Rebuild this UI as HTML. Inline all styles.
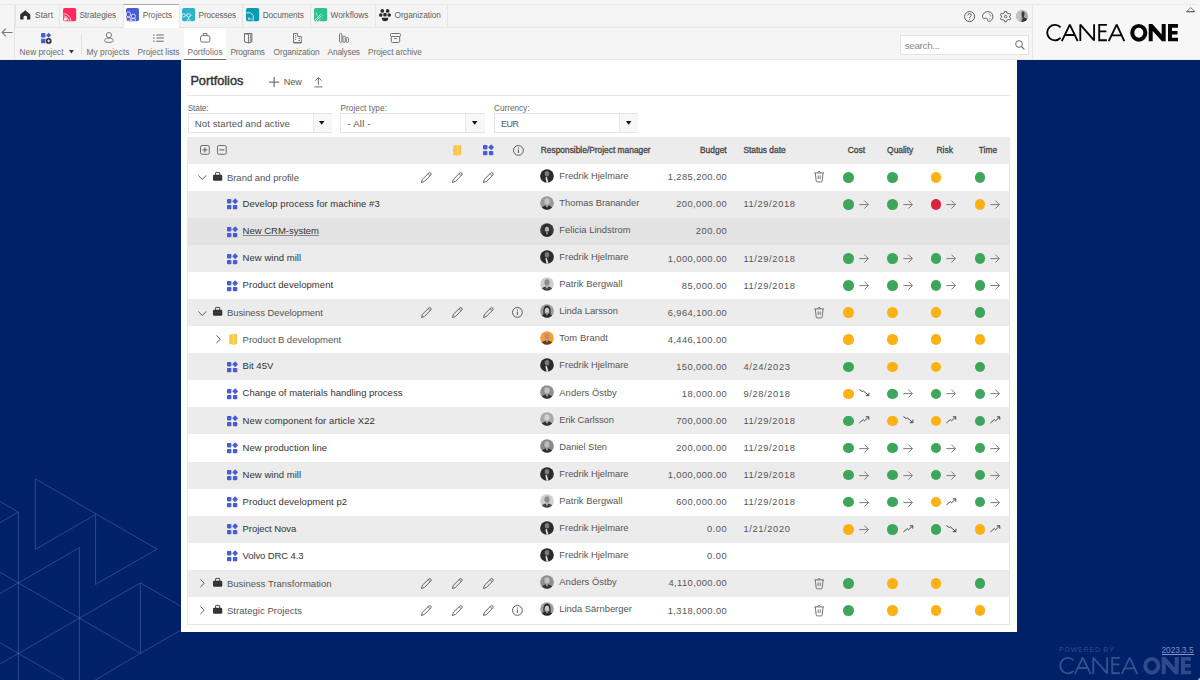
<!DOCTYPE html>
<html><head><meta charset="utf-8"><title>Portfolios</title>
<style>
*{box-sizing:border-box;margin:0;padding:0}
html,body{width:1200px;height:680px;overflow:hidden}
body{position:relative;background:#002068;font-family:"Liberation Sans",sans-serif;color:#444}
.a{position:absolute}
.t{position:absolute;white-space:nowrap;line-height:1}
svg{position:absolute;overflow:visible}
#hdr{left:0;top:0;width:1200px;height:60px;background:#f5f5f5}
.tab{position:absolute;top:4px;height:24px;border-left:1px solid #e6e6e6;border-top:1px solid #ececec;border-bottom:1px solid #e6e6e6;background:#f4f4f4}
.tab.act{background:#fff;border-top:1px solid #a9a9a9;border-bottom:none;border-left:1px solid #e6e6e6;border-right:1px solid #e6e6e6}
.ti{position:absolute;top:3.6px;width:13.2px;height:13.2px;border-radius:2px}
.tt{position:absolute;top:7.6px;font-size:8.2px;color:#555;line-height:1;white-space:nowrap}
.sn{position:absolute;top:48.8px;font-size:8.2px;color:#666;line-height:1;white-space:nowrap}
#panel{left:181px;top:60px;width:836px;height:571.5px;background:#fff}
.row{position:absolute;left:188px;width:822px;height:27.08px}
.w{background:#fff}.g{background:#ececec}.h{background:#e3e3e3}
.nm{position:absolute;font-size:9.5px;line-height:1;white-space:nowrap;color:#333}
.pn{color:#555}
.per{position:absolute;font-size:9.4px;line-height:1;white-space:nowrap;color:#555}
.bud{position:absolute;font-size:10.1px;line-height:1;white-space:nowrap;color:#555;text-align:right}
.dt{position:absolute;font-size:10.4px;line-height:1;white-space:nowrap;color:#555}
.dot{position:absolute;width:10.6px;height:10.6px;border-radius:50%}
.G{background:#3ea65a}.O{background:#fdb113}.R{background:#d9263f}
.av{position:absolute;width:14px;height:14px;border-radius:50%;overflow:hidden}
.th{position:absolute;top:147px;font-size:8px;font-weight:bold;color:#4a4a4a;line-height:1;white-space:nowrap}
</style></head><body>

<svg style="left:0;top:0" width="1200" height="680"><path d="M35.4 478.9 L157.0 549.1 M35.4 478.9 L35.4 549.3 M35.4 549.3 L95.6 514.6 M95.6 514.6 L95.6 584.4 M95.6 584.4 L157.0 549.1 M18.4 512.1 L18.4 680.0 M79.4 547.6 L79.4 680.0 M140.4 582.9 L140.4 653.4 M0.0 501.5 L18.4 512.1 M0.0 522.7 L18.4 512.1 M0.0 572.3 L140.4 653.4 M0.0 593.5 L18.4 582.9 M18.4 582.9 L79.4 547.6 M18.4 653.4 L140.4 582.9 M140.4 582.9 L181.0 606.3 M0.0 642.8 L18.4 653.4 M0.0 664.0 L18.4 653.4 M18.4 653.4 L63.9 679.7 M94.5 680.5 L140.4 653.4 M140.4 653.4 L181.0 630.0" stroke="#5a73b4" stroke-opacity="0.55" stroke-width="0.9" fill="none"/></svg>
<div class="a" id="hdr"></div>
<div class="a" style="left:0;top:0;width:1200px;height:3.5px;background:#f6f6f6"></div>
<div class="a" style="left:0;top:3.5px;width:1194px;height:1.2px;background:#ebebeb"></div>
<div class="a" style="left:1186px;top:3.5px;width:14px;height:12px;border-top:1.2px solid #ebebeb;border-right:1.2px solid #ebebeb;border-top-right-radius:6px"></div>
<div class="a" style="left:0;top:4.5px;width:15px;height:54.5px;background:#f5f5f5;border-right:1px solid #e6e6e6"></div>
<svg style="left:1.00px;top:27.60px" width="12" height="9" viewBox="0 0 12 9"><path d="M11.6 4.5 H1.2 M5 0.6 L1.1 4.5 L5 8.4" stroke="#7a7a7a" stroke-width="1.1" fill="none"/></svg>
<div class="tab" style="left:15.00px;width:44.30px"></div>
<div class="t" style="left:35.00px;top:10.97px;font-size:8.30px;color:#616161;letter-spacing:0.118px;">Start</div>
<div class="tab" style="left:59.30px;width:63.30px"></div>
<div class="t" style="left:79.40px;top:10.97px;font-size:8.30px;color:#616161;letter-spacing:-0.063px;">Strategies</div>
<div class="tab act" style="left:122.60px;width:57.40px"></div>
<div class="t" style="left:142.70px;top:10.97px;font-size:8.30px;color:#616161;letter-spacing:-0.069px;">Projects</div>
<div class="tab" style="left:179.00px;width:63.20px"></div>
<div class="t" style="left:198.60px;top:10.97px;font-size:8.30px;color:#616161;letter-spacing:-0.156px;">Processes</div>
<div class="tab" style="left:242.20px;width:68.05px"></div>
<div class="t" style="left:262.70px;top:10.97px;font-size:8.30px;color:#616161;letter-spacing:-0.085px;">Documents</div>
<div class="tab" style="left:310.25px;width:64.75px"></div>
<div class="t" style="left:330.50px;top:10.97px;font-size:8.30px;color:#616161;letter-spacing:-0.016px;">Workflows</div>
<div class="tab" style="left:375.00px;width:72.00px"></div>
<div class="t" style="left:394.50px;top:10.97px;font-size:8.30px;color:#616161;letter-spacing:-0.051px;">Organization</div>
<div class="a" style="left:447px;top:4.5px;width:1px;height:23.5px;background:#e6e6e6"></div>
<div class="a" style="left:447px;top:27.2px;width:585px;height:1px;background:#e6e6e6"></div>
<svg style="left:20.00px;top:9.60px" width="10.5" height="9.8" viewBox="0 0 10.5 9.8"><path d="M5.25 0.3 L10.3 4.5 L10.3 9.6 L7 9.6 L7 6.8 Q7 5.7 5.25 5.7 Q3.5 5.7 3.5 6.8 L3.5 9.6 L0.2 9.6 L0.2 4.5 Z" fill="#2f2f2f"/></svg>
<svg style="left:63.00px;top:8.00px" width="13.2" height="13.2" viewBox="0 0 13.2 13.2"><rect width="13.2" height="13.2" rx="1.8" fill="#ff2a5f"/><g stroke="#f6dbe0" stroke-width="0.95" fill="none"><path d="M0.4 5.6 A7.4 7.4 0 0 1 7.8 13"/><path d="M0.4 7.9 A5.1 5.1 0 0 1 5.5 13"/></g><circle cx="2.4" cy="11" r="1.55" fill="#ffffff" stroke="#f6dbe0" stroke-width="0.6"/></svg>
<svg style="left:126.30px;top:8.00px" width="13" height="13.2" viewBox="0 0 13 13.2"><rect width="13" height="13.2" rx="1.8" fill="#4b5bd1"/><g stroke="#e3e6fa" stroke-width="0.9" fill="none"><rect x="0.45" y="3.9" width="3.9" height="4.9" rx="1.6"/><rect x="0.45" y="9.4" width="3.9" height="3.6" rx="0.8"/><rect x="5.2" y="6.3" width="4.2" height="3.9" rx="1.6"/><rect x="5.2" y="10.6" width="4.2" height="2.6" rx="0.6"/></g></svg>
<svg style="left:182.00px;top:8.00px" width="13.2" height="13.2" viewBox="0 0 13.2 13.2"><rect width="13.2" height="13.2" rx="1.8" fill="#2cb5c9"/><g stroke="#d3f0f4" stroke-width="0.95" fill="none"><circle cx="1.6" cy="7.3" r="1.7"/><circle cx="6.6" cy="7.3" r="1.8"/><circle cx="6.6" cy="12.4" r="1.4"/><path d="M3.3 7.3 H4.8 M6.6 9.1 V11 M8.4 7.3 H9.6"/></g></svg>
<svg style="left:246.00px;top:8.00px" width="13.2" height="13.2" viewBox="0 0 13.2 13.2"><rect width="13.2" height="13.2" rx="1.8" fill="#0d9aaf"/><path d="M0.3 4.8 H4.6 L7.2 7.4 V13" stroke="#d0eef3" stroke-width="0.95" fill="none"/><path d="M2.4 9.4 V12 M3.8 9.4 V12 M5.1 10.2 V12" stroke="#d0eef3" stroke-width="0.75"/></svg>
<svg style="left:313.75px;top:8.00px" width="13.2" height="13.2" viewBox="0 0 13.2 13.2"><rect width="13.2" height="13.2" rx="1.8" fill="#2ec190"/><path d="M0.5 12.4 L6.8 6.2 M2 13 L7 8 M4.6 13 L6.8 10.8" stroke="#d8f4ea" stroke-width="0.9" fill="none"/><path d="M7.6 5.4 V6 M8.4 7.4 V8 M8.4 9.6 V10.2 M2 4.8 Q2.2 6.6 3.2 7.6" stroke="#d8f4ea" stroke-width="0.9" fill="none"/></svg>
<svg style="left:379.00px;top:7.50px" width="12.5" height="13.5" viewBox="0 0 12.5 13.5"><g fill="#2b2b2b"><circle cx="3.3" cy="2.9" r="1.85"/><circle cx="8.6" cy="2.9" r="1.85"/><circle cx="1.8" cy="7" r="1.85"/><circle cx="6" cy="6.7" r="1.85"/><circle cx="10.2" cy="7" r="1.85"/><path d="M2.8 9.7 H9.3 Q9.3 13.2 6.05 13.2 Q2.8 13.2 2.8 9.7 Z"/></g></svg>
<div class="a" style="left:0;top:59.1px;width:1200px;height:1.2px;background:#e9e9e9"></div>
<svg style="left:41.00px;top:33.00px" width="11" height="11" viewBox="0 0 11 11"><g fill="#4b5bd1"><rect x="0" y="0" width="4.4" height="4.4" rx="0.4"/><rect x="0" y="5.8" width="4.4" height="4.4" rx="0.4"/><path d="M7.6 -0.2 L10.2 2.3 L7.6 4.8 L5.1 2.3 Z"/></g><circle cx="7.7" cy="7.9" r="2.9" fill="#2f2f2f"/><path d="M7.7 6.4 V9.4 M6.2 7.9 H9.2" stroke="#fff" stroke-width="0.9"/></svg>
<div class="t" style="left:19.50px;top:47.77px;font-size:8.30px;color:#6b6b6b;letter-spacing:0.018px;">New project</div>
<svg style="left:69.00px;top:50.40px" width="4.8" height="3.6" viewBox="0 0 4.8 3.6"><path d="M0 0 H4.8 L2.4 3.6 Z" fill="#333"/></svg>
<div class="a" style="left:81px;top:34px;width:1px;height:20px;background:#e2e2e2"></div>
<svg style="left:103.50px;top:32.20px" width="10" height="11" viewBox="0 0 10 11"><g stroke="#777" stroke-width="1" fill="none"><circle cx="4.9" cy="3.1" r="2.6"/><path d="M4.9 6.2 C1.2 6.2 0.5 7.6 0.5 8.4 C0.5 9.6 2 10.4 4.9 10.4 C7.8 10.4 9.3 9.6 9.3 8.4 C9.3 7.6 8.6 6.2 4.9 6.2 Z"/></g></svg>
<div class="t" style="left:86.50px;top:47.77px;font-size:8.30px;color:#6b6b6b;letter-spacing:0.057px;">My projects</div>
<svg style="left:153.00px;top:33.50px" width="11.5" height="8" viewBox="0 0 11.5 8"><g fill="#6a6a6a"><rect x="0.2" y="0.4" width="1.3" height="1.2"/><rect x="0.2" y="3.4" width="1.3" height="1.2"/><rect x="0.2" y="6.6" width="1.3" height="1.2"/></g><g stroke="#6a6a6a" stroke-width="1.1"><path d="M3.3 1 H10.8 M3.3 4 H10.8 M3.3 7.2 H10.8"/></g></svg>
<div class="t" style="left:137.50px;top:47.77px;font-size:8.30px;color:#6b6b6b;letter-spacing:-0.036px;">Project lists</div>
<div class="a" style="left:184px;top:28.2px;width:41.5px;height:31.8px;background:#fff"></div>
<div class="a" style="left:184px;top:58.6px;width:41.5px;height:1.6px;background:#6a6a6a"></div>
<svg style="left:199.80px;top:32.80px" width="10.4" height="9.6" viewBox="0 0 10.4 9.6"><g stroke="#6a6a6a" stroke-width="0.95" fill="none"><rect x="0.5" y="2.6" width="9.4" height="6.5" rx="1.8"/><path d="M3.3 2.6 V0.5 H6.9 V2.6"/></g></svg>
<div class="t" style="left:187.60px;top:47.77px;font-size:8.30px;color:#6b6b6b;letter-spacing:0.045px;">Portfolios</div>
<svg style="left:244.00px;top:32.80px" width="8.5" height="10.5" viewBox="0 0 8.5 10.5"><g stroke="#666" stroke-width="0.95" fill="none" stroke-linejoin="round"><path d="M0.5 0.5 L4.6 1.4 V10 L0.5 8.9 Z"/><path d="M0.5 0.5 H7.9 V8.9 L4.6 10"/><path d="M6.8 1.2 V8.5"/></g></svg>
<div class="t" style="left:230.50px;top:47.77px;font-size:8.30px;color:#6b6b6b;letter-spacing:-0.211px;">Programs</div>
<svg style="left:292.50px;top:32.70px" width="9" height="10.5" viewBox="0 0 9 10.5"><g stroke="#6a6a6a" stroke-width="0.9" fill="none"><path d="M0.5 10 V0.5 H4.6 V3.5 H8.3 V10 Z"/><path d="M2 2.5 H3.2 M2 4.5 H3.2 M2 6.5 H3.2 M5.5 5.5 H7 M5.5 7.5 H7 M0.5 9.5 H8.3"/></g></svg>
<div class="t" style="left:273.60px;top:47.77px;font-size:8.30px;color:#6b6b6b;letter-spacing:-0.087px;">Organization</div>
<svg style="left:339.00px;top:33.00px" width="10" height="10" viewBox="0 0 10 10"><g stroke="#6a6a6a" stroke-width="0.9" fill="none"><rect x="0.5" y="0.5" width="2.4" height="9" rx="1.2"/><rect x="3.9" y="3" width="2.4" height="6.5" rx="1.2"/><rect x="7.2" y="4.4" width="2.3" height="5.1" rx="1.15"/></g></svg>
<div class="t" style="left:327.60px;top:47.77px;font-size:8.30px;color:#6b6b6b;letter-spacing:-0.183px;">Analyses</div>
<svg style="left:390.00px;top:33.20px" width="11" height="10" viewBox="0 0 11 10"><g stroke="#6a6a6a" stroke-width="0.95" fill="none"><rect x="0.5" y="0.5" width="10" height="3" rx="1"/><path d="M1.3 3.5 V8.2 Q1.3 9.5 2.6 9.5 H8.4 Q9.7 9.5 9.7 8.2 V3.5 M4.2 5.6 H6.8"/></g></svg>
<div class="t" style="left:368.00px;top:47.77px;font-size:8.30px;color:#6b6b6b;letter-spacing:-0.064px;">Project archive</div>
<svg style="left:963.70px;top:10.60px" width="11.2" height="11.2" viewBox="0 0 11.2 11.2"><circle cx="5.6" cy="5.6" r="5.05" stroke="#555" stroke-width="0.95" fill="none"/><path d="M3.9 4.4 Q3.9 2.7 5.6 2.7 Q7.3 2.7 7.3 4.3 Q7.3 5.2 6.3 5.7 Q5.6 6.1 5.6 6.9 V7.2" stroke="#555" stroke-width="0.95" fill="none"/><circle cx="5.6" cy="8.7" r="0.6" fill="#555"/></svg>
<svg style="left:981.80px;top:10.80px" width="11.4" height="11" viewBox="0 0 11.4 11"><path d="M5.9 0.6 C9.2 0.6 10.9 3 10.9 5.6 C10.9 8.6 8.8 10.4 7 10.4 C5.6 10.4 5.6 9 5.2 8 C4.7 6.9 3.6 7 2.4 7.4 C1.2 7.8 0.5 7 0.5 5.6 C0.5 2.6 3 0.6 5.9 0.6 Z" stroke="#555" stroke-width="0.95" fill="none"/><path d="M6.6 2.6 Q8.6 3.4 8.9 5.6 M8.2 7 Q7.8 8.2 6.8 8.6" stroke="#777" stroke-width="0.7" fill="none"/></svg>
<svg style="left:999.60px;top:10.50px" width="11.2" height="11.2" viewBox="0 0 11.2 11.2"><path d="M4.6 0.5 H6.6 L7 2 L8.3 2.7 L9.8 2.2 L10.8 3.9 L9.7 5 V6.2 L10.8 7.3 L9.8 9 L8.3 8.5 L7 9.2 L6.6 10.7 H4.6 L4.2 9.2 L2.9 8.5 L1.4 9 L0.4 7.3 L1.5 6.2 V5 L0.4 3.9 L1.4 2.2 L2.9 2.7 L4.2 2 Z" stroke="#555" stroke-width="0.95" fill="none" stroke-linejoin="round"/><circle cx="5.6" cy="5.6" r="1.25" stroke="#555" stroke-width="0.95" fill="none"/></svg>
<svg style="left:1016.00px;top:10.00px" width="12" height="12" viewBox="0 0 12 12"><defs><clipPath id="avc"><circle cx="6" cy="6" r="6"/></clipPath></defs><g clip-path="url(#avc)"><rect width="12" height="12" fill="#a8a8a8"/><path d="M0 0 H6 L4 12 H0 Z" fill="#c4c4c4"/><path d="M6.2 1.4 Q8.6 1.2 8.6 3.8 Q8.4 5.6 7.6 6.4 L10.4 9.6 L8.6 12 L5.2 12 L6.6 8.6 Q5.4 6.4 5.6 4 Q5.6 1.6 6.2 1.4 Z" fill="#3a3a3a"/><path d="M9 8 L12 9 L12 12 L9 12 Z" fill="#2a2a2a"/></g></svg>
<div class="a" style="left:899.9px;top:34.8px;width:128.8px;height:19.8px;background:#fff;border:1px solid #e3e3e3"></div>
<div class="t" style="left:904.80px;top:40.50px;font-size:9.80px;color:#8a8a8a;letter-spacing:-0.323px;">search...</div>
<svg style="left:1014.80px;top:39.50px" width="10" height="10" viewBox="0 0 10 10"><circle cx="4" cy="4" r="3.35" stroke="#666" stroke-width="1" fill="none"/><path d="M6.5 6.5 L9.4 9.4" stroke="#666" stroke-width="1.1"/></svg>
<div class="a" style="left:1031.7px;top:4.5px;width:1px;height:54.3px;background:#e6e6e6"></div>
<div class="a" style="left:1032.7px;top:4.7px;width:167.3px;height:54.3px;background:#f7f7f7;border-top-right-radius:4px"></div>
<svg style="left:1185.70px;top:6.70px" width="9.5" height="5.2" viewBox="0 0 9.5 5.2"><path d="M4.75 0.6 L8.9 4.6 H0.6 Z" stroke="#666" stroke-width="0.9" fill="none" stroke-linejoin="round"/><path d="M0.6 4.6 H8.9" stroke="#666" stroke-width="1.3"/></svg>
<svg style="left:1046.00px;top:24.30px" width="133" height="18" viewBox="0 0 133 18"><g stroke="#050505" stroke-width="1.85" fill="none" stroke-miterlimit="1.6"><path d="M14.6 3.3 A7.75 7.75 0 1 0 14.6 13.9"/><path d="M15.8 17.1 L23.8 0.7 L31.7 17.1 M19 11 H28.6"/><path d="M34.3 17 V0.6 L48.1 16.4 V0.2"/><path d="M60.9 0.8 H53.2 V16.2 H60.9 M53.2 7.4 H60.4"/><path d="M62.7 17.1 L70.7 0.7 L78.3 17.1 M65.9 11.3 H75.1"/></g><g fill="#050505"><path fill-rule="evenodd" d="M92.8 -0.1 A8.6 8.9 0 1 1 92.8 17.7 A8.6 8.9 0 1 1 92.8 -0.1 Z M92.8 3.8 A4.5 5 0 1 0 92.8 13.8 A4.5 5 0 1 0 92.8 3.8 Z"/><path d="M102.7 17.3 V0.1 H106.4 L115.7 10.4 V0.1 H119.7 V17.3 H116 L106.7 7.1 V17.3 Z"/><path d="M122 0.1 H132 V3.7 H126 V6.9 H131.5 V10.4 H126 V13.8 H132 V17.3 H122 Z"/></g></svg>
<div class="a" id="panel"></div>
<div class="t" style="left:190.40px;top:74.74px;font-size:12.71px;color:#333;-webkit-text-stroke:0.45px #333;">Portfolios</div>
<svg style="left:268.60px;top:76.70px" width="10.2" height="10.2" viewBox="0 0 10.2 10.2"><path d="M5.1 0 V10.2 M0 5.1 H10.2" stroke="#555" stroke-width="1"/></svg>
<div class="t" style="left:283.70px;top:77.86px;font-size:9.15px;color:#555;">New</div>
<svg style="left:314.00px;top:76.50px" width="8.8" height="10.5" viewBox="0 0 8.8 10.5"><path d="M4.4 0.6 V8.2 M1.2 3.7 L4.4 0.5 L7.6 3.7 M0.3 9.9 H8.5" stroke="#666" stroke-width="0.95" fill="none"/></svg>
<div class="a" style="left:187.3px;top:95.2px;width:822.7px;height:1px;background:#e6e6e6"></div>
<div class="t" style="left:187.70px;top:104.96px;font-size:8.20px;color:#666;letter-spacing:-0.105px;">State:</div>
<div class="a" style="left:187.70px;top:113.3px;width:144.3px;height:20px;background:#fff;border:1px solid #e4e4e4"></div>
<div class="a" style="left:312.70px;top:114.3px;width:1px;height:18px;background:#e8e8e8"></div>
<div class="a" style="left:313.70px;top:114.3px;width:18.3px;height:18px;background:#f7f7f7"></div>
<svg style="left:319.30px;top:121.20px" width="5.4" height="3.8" viewBox="0 0 5.4 3.8"><path d="M0 0 H5.4 L2.7 3.8 Z" fill="#111"/></svg>
<div class="t" style="left:194.70px;top:119.07px;font-size:9.60px;color:#555;letter-spacing:0.091px;">Not started and active</div>
<div class="t" style="left:340.40px;top:104.96px;font-size:8.20px;color:#666;letter-spacing:0.085px;">Project type:</div>
<div class="a" style="left:340.40px;top:113.3px;width:144.3px;height:20px;background:#fff;border:1px solid #e4e4e4"></div>
<div class="a" style="left:465.40px;top:114.3px;width:1px;height:18px;background:#e8e8e8"></div>
<div class="a" style="left:466.40px;top:114.3px;width:18.3px;height:18px;background:#f7f7f7"></div>
<svg style="left:472.00px;top:121.20px" width="5.4" height="3.8" viewBox="0 0 5.4 3.8"><path d="M0 0 H5.4 L2.7 3.8 Z" fill="#111"/></svg>
<div class="t" style="left:347.40px;top:119.07px;font-size:9.60px;color:#555;letter-spacing:0.239px;">- All -</div>
<div class="t" style="left:494.00px;top:104.96px;font-size:8.20px;color:#666;letter-spacing:-0.005px;">Currency:</div>
<div class="a" style="left:494.00px;top:113.3px;width:144.3px;height:20px;background:#fff;border:1px solid #e4e4e4"></div>
<div class="a" style="left:619.00px;top:114.3px;width:1px;height:18px;background:#e8e8e8"></div>
<div class="a" style="left:620.00px;top:114.3px;width:18.3px;height:18px;background:#f7f7f7"></div>
<svg style="left:625.60px;top:121.20px" width="5.4" height="3.8" viewBox="0 0 5.4 3.8"><path d="M0 0 H5.4 L2.7 3.8 Z" fill="#111"/></svg>
<div class="t" style="left:501.00px;top:119.58px;font-size:9.00px;color:#555;letter-spacing:-0.451px;">EUR</div>
<div class="a" style="left:187.3px;top:136.8px;width:822.7px;height:26.9px;background:#ececec"></div>
<svg style="left:199.60px;top:145.20px" width="9.8" height="9.8" viewBox="0 0 9.8 9.8"><rect x="0.5" y="0.5" width="8.8" height="8.8" rx="1.6" stroke="#666" stroke-width="0.95" fill="none"/><path d="M4.9 2.4 V7.4 M2.4 4.9 H7.4" stroke="#555" stroke-width="0.95"/></svg>
<svg style="left:216.90px;top:145.20px" width="9.8" height="9.8" viewBox="0 0 9.8 9.8"><rect x="0.5" y="0.5" width="8.8" height="8.8" rx="1.6" stroke="#666" stroke-width="0.95" fill="none"/><path d="M2.4 4.9 H7.4" stroke="#555" stroke-width="0.95"/></svg>
<svg style="left:452.80px;top:144.50px" width="8.4" height="11" viewBox="0 0 8.4 11"><path d="M0.2 0.8 L4.2 0 V11 L0.2 9.6 Z" fill="#f9c54a"/><path d="M4.6 0 H8.2 V9.8 L4.6 11 Z" fill="#f9c54a"/></svg>
<svg style="left:483.20px;top:145.10px" width="10.6" height="10.6" viewBox="0 0 10.6 10.6"><g fill="#4b5bd1"><rect x="0" y="0" width="4.4" height="4.4" rx="0.8"/><rect x="0" y="5.9" width="4.4" height="4.4" rx="0.8"/><rect x="5.9" y="5.9" width="4.4" height="4.4" rx="0.8"/><path d="M8.15 -0.75 L11.1 2.2 L8.15 5.15 L5.2 2.2 Z"/></g></svg>
<svg style="left:513.00px;top:144.90px" width="11" height="11" viewBox="0 0 11 11"><circle cx="5.4" cy="5.4" r="4.9" stroke="#555" stroke-width="0.95" fill="none"/><path d="M5.4 4.6 V8" stroke="#555" stroke-width="1"/><circle cx="5.4" cy="3.1" r="0.6" fill="#555"/></svg>
<div class="t" style="left:540.80px;top:146.10px;font-size:8.39px;color:#444;-webkit-text-stroke:0.3px #444;">Responsible/Project manager</div>
<div class="t" style="left:700.00px;top:146.07px;font-size:8.42px;color:#444;-webkit-text-stroke:0.3px #444;">Budget</div>
<div class="t" style="left:743.40px;top:146.12px;font-size:8.36px;color:#444;-webkit-text-stroke:0.3px #444;">Status date</div>
<div class="t" style="left:847.70px;top:146.04px;font-size:8.46px;color:#444;-webkit-text-stroke:0.3px #444;">Cost</div>
<div class="t" style="left:887.10px;top:146.07px;font-size:8.42px;color:#444;-webkit-text-stroke:0.3px #444;">Quality</div>
<div class="t" style="left:936.40px;top:145.97px;font-size:8.54px;color:#444;-webkit-text-stroke:0.3px #444;">Risk</div>
<div class="t" style="left:978.80px;top:146.11px;font-size:8.37px;color:#444;-webkit-text-stroke:0.3px #444;">Time</div>
<div class="row w" style="top:163.70px"></div>
<svg style="left:198.30px;top:175.44px" width="8.6" height="5" viewBox="0 0 8.6 5"><path d="M0.4 0.4 L4.3 4.6 L8.2 0.4" stroke="#555" stroke-width="0.95" fill="none"/></svg>
<svg style="left:212.80px;top:172.04px" width="9.4" height="9" viewBox="0 0 9.4 9"><rect x="0" y="2.8" width="9.3" height="6" rx="1.3" fill="#333"/><path d="M2.6 3 V1 Q2.6 0.4 3.2 0.4 H6.1 Q6.7 0.4 6.7 1 V3" stroke="#333" stroke-width="0.9" fill="none"/><path d="M0.6 5.2 H8.7" stroke="#555" stroke-width="0.4"/></svg>
<div class="t" style="left:226.90px;top:172.70px;font-size:9.50px;color:#555;letter-spacing:-0.016px;">Brand and profile</div>
<svg style="left:420.80px;top:171.84px" width="11" height="11" viewBox="0 0 11 11"><path d="M1.3 7.4 L7.9 0.9 Q8.8 0.1 9.8 1.1 Q10.7 2.1 9.9 2.9 L3.4 9.5 L0.5 10.5 Z M7.1 1.7 L9.1 3.7" stroke="#555" stroke-width="0.9" fill="none" stroke-linejoin="round"/></svg>
<svg style="left:451.80px;top:171.84px" width="11" height="11" viewBox="0 0 11 11"><path d="M1.3 7.4 L7.9 0.9 Q8.8 0.1 9.8 1.1 Q10.7 2.1 9.9 2.9 L3.4 9.5 L0.5 10.5 Z M7.1 1.7 L9.1 3.7" stroke="#555" stroke-width="0.9" fill="none" stroke-linejoin="round"/></svg>
<svg style="left:482.80px;top:171.84px" width="11" height="11" viewBox="0 0 11 11"><path d="M1.3 7.4 L7.9 0.9 Q8.8 0.1 9.8 1.1 Q10.7 2.1 9.9 2.9 L3.4 9.5 L0.5 10.5 Z M7.1 1.7 L9.1 3.7" stroke="#555" stroke-width="0.9" fill="none" stroke-linejoin="round"/></svg>
<svg style="left:813.80px;top:171.44px" width="10.4" height="11.4" viewBox="0 0 10.4 11.4"><path d="M0.4 1.9 H10 M3.8 1.7 Q4.2 0.4 5.2 0.4 Q6.2 0.4 6.6 1.7 M1.3 2 L2.2 10 Q2.3 10.9 3.2 10.9 H7.2 Q8.1 10.9 8.2 10 L9.1 2 M4.2 4.5 V8 M6.2 4.5 V8" stroke="#666" stroke-width="0.9" fill="none" stroke-linejoin="round"/></svg>
<svg style="left:540.30px;top:168.64px" width="14" height="14" viewBox="0 0 14 14"><defs><clipPath id="av1"><circle cx="7" cy="7" r="6.85"/></clipPath></defs><g clip-path="url(#av1)"><rect width="14" height="14" fill="#2b2b2b"/><ellipse cx="7" cy="4.8" rx="2.3" ry="2.8" fill="#7a7a7a"/><path d="M5.4 8.2 L6.8 8 L8.6 14 L6.6 14 Z" fill="#e8e8e8"/></g></svg>
<div class="t" style="left:559.30px;top:170.88px;font-size:9.40px;color:#555;letter-spacing:-0.005px;">Fredrik Hjelmare</div>
<div class="t" style="right:472.88px;top:173.27px;font-size:9.30px;color:#555;letter-spacing:0.425px;">1,285,200.00</div>
<div class="dot G" style="left:843.20px;top:171.94px"></div>
<div class="dot G" style="left:887.10px;top:171.94px"></div>
<div class="dot O" style="left:930.80px;top:171.94px"></div>
<div class="dot G" style="left:974.60px;top:171.94px"></div>
<div class="row g" style="top:190.78px"></div>
<svg style="left:227.20px;top:199.42px" width="10.6" height="10.6" viewBox="0 0 10.6 10.6"><g fill="#4b5bd1"><rect x="0" y="0" width="4.4" height="4.4" rx="0.8"/><rect x="0" y="5.9" width="4.4" height="4.4" rx="0.8"/><rect x="5.9" y="5.9" width="4.4" height="4.4" rx="0.8"/><path d="M8.15 -0.75 L11.1 2.2 L8.15 5.15 L5.2 2.2 Z"/></g></svg>
<div class="t" style="left:242.60px;top:198.88px;font-size:9.50px;color:#333;letter-spacing:0.030px;">Develop process for machine #3</div>
<svg style="left:540.30px;top:195.72px" width="14" height="14" viewBox="0 0 14 14"><defs><clipPath id="av2"><circle cx="7" cy="7" r="6.85"/></clipPath></defs><g clip-path="url(#av2)"><rect width="14" height="14" fill="#9a9a9a"/><ellipse cx="7" cy="5.4" rx="2.6" ry="3.2" fill="#c4c4c4"/><path d="M0.5 14 Q1.6 9.6 7 9.4 Q12.4 9.6 13.5 14 Z" fill="#2a2a2a"/><path d="M6 9.6 L7 12 L8 9.6 Z" fill="#dddddd"/></g></svg>
<div class="t" style="left:559.30px;top:197.96px;font-size:9.40px;color:#555;letter-spacing:-0.018px;">Thomas Branander</div>
<div class="t" style="right:472.86px;top:200.35px;font-size:9.30px;color:#555;letter-spacing:0.445px;">200,000.00</div>
<div class="t" style="left:743.40px;top:200.35px;font-size:9.30px;color:#555;letter-spacing:0.630px;">11/29/2018</div>
<div class="dot G" style="left:843.20px;top:199.02px"></div>
<svg style="left:858.80px;top:199.92px" width="10.2" height="9.2" viewBox="0 0 10.2 9.2"><path d="M0.3 4.6 H9.4 M5.4 0.6 L9.4 4.6 L5.4 8.6" stroke="#6e6e6e" stroke-width="0.9" fill="none"/></svg>
<div class="dot G" style="left:887.10px;top:199.02px"></div>
<svg style="left:902.70px;top:199.92px" width="10.2" height="9.2" viewBox="0 0 10.2 9.2"><path d="M0.3 4.6 H9.4 M5.4 0.6 L9.4 4.6 L5.4 8.6" stroke="#6e6e6e" stroke-width="0.9" fill="none"/></svg>
<div class="dot R" style="left:930.80px;top:199.02px"></div>
<svg style="left:946.40px;top:199.92px" width="10.2" height="9.2" viewBox="0 0 10.2 9.2"><path d="M0.3 4.6 H9.4 M5.4 0.6 L9.4 4.6 L5.4 8.6" stroke="#6e6e6e" stroke-width="0.9" fill="none"/></svg>
<div class="dot O" style="left:974.60px;top:199.02px"></div>
<svg style="left:990.20px;top:199.92px" width="10.2" height="9.2" viewBox="0 0 10.2 9.2"><path d="M0.3 4.6 H9.4 M5.4 0.6 L9.4 4.6 L5.4 8.6" stroke="#6e6e6e" stroke-width="0.9" fill="none"/></svg>
<div class="row h" style="top:217.86px"></div>
<svg style="left:227.20px;top:226.50px" width="10.6" height="10.6" viewBox="0 0 10.6 10.6"><g fill="#4b5bd1"><rect x="0" y="0" width="4.4" height="4.4" rx="0.8"/><rect x="0" y="5.9" width="4.4" height="4.4" rx="0.8"/><rect x="5.9" y="5.9" width="4.4" height="4.4" rx="0.8"/><path d="M8.15 -0.75 L11.1 2.2 L8.15 5.15 L5.2 2.2 Z"/></g></svg>
<div class="t" style="left:242.60px;top:225.96px;font-size:9.50px;color:#333;letter-spacing:-0.010px;text-decoration:underline;text-decoration-color:#888;text-underline-offset:1px;">New CRM-system</div>
<svg style="left:540.30px;top:222.80px" width="14" height="14" viewBox="0 0 14 14"><defs><clipPath id="av3"><circle cx="7" cy="7" r="6.85"/></clipPath></defs><g clip-path="url(#av3)"><rect width="14" height="14" fill="#3a3a3a"/><ellipse cx="7" cy="5.4" rx="2.6" ry="3.2" fill="#b0b0b0"/><path d="M3.4 10 Q2.6 1.4 7 1.4 Q11.4 1.4 10.6 10 L9.4 10 Q9.8 3.6 7 3.6 Q4.2 3.6 4.6 10 Z" fill="#262626"/><path d="M0.5 14 Q1.6 9.6 7 9.4 Q12.4 9.6 13.5 14 Z" fill="#262626"/><path d="M6 9.6 L7 12 L8 9.6 Z" fill="#cfcfcf"/></g></svg>
<div class="t" style="left:559.30px;top:225.04px;font-size:9.40px;color:#555;letter-spacing:0.028px;">Felicia Lindstrom</div>
<div class="t" style="right:472.81px;top:227.43px;font-size:9.30px;color:#555;letter-spacing:0.489px;">200.00</div>
<div class="row g" style="top:244.94px"></div>
<svg style="left:227.20px;top:253.58px" width="10.6" height="10.6" viewBox="0 0 10.6 10.6"><g fill="#4b5bd1"><rect x="0" y="0" width="4.4" height="4.4" rx="0.8"/><rect x="0" y="5.9" width="4.4" height="4.4" rx="0.8"/><rect x="5.9" y="5.9" width="4.4" height="4.4" rx="0.8"/><path d="M8.15 -0.75 L11.1 2.2 L8.15 5.15 L5.2 2.2 Z"/></g></svg>
<div class="t" style="left:242.60px;top:253.04px;font-size:9.50px;color:#333;letter-spacing:0.036px;">New wind mill</div>
<svg style="left:540.30px;top:249.88px" width="14" height="14" viewBox="0 0 14 14"><defs><clipPath id="av4"><circle cx="7" cy="7" r="6.85"/></clipPath></defs><g clip-path="url(#av4)"><rect width="14" height="14" fill="#2b2b2b"/><ellipse cx="7" cy="4.8" rx="2.3" ry="2.8" fill="#7a7a7a"/><path d="M5.4 8.2 L6.8 8 L8.6 14 L6.6 14 Z" fill="#e8e8e8"/></g></svg>
<div class="t" style="left:559.30px;top:252.12px;font-size:9.40px;color:#555;letter-spacing:-0.005px;">Fredrik Hjelmare</div>
<div class="t" style="right:472.88px;top:254.51px;font-size:9.30px;color:#555;letter-spacing:0.425px;">1,000,000.00</div>
<div class="t" style="left:743.40px;top:254.51px;font-size:9.30px;color:#555;letter-spacing:0.630px;">11/29/2018</div>
<div class="dot G" style="left:843.20px;top:253.18px"></div>
<svg style="left:858.80px;top:254.08px" width="10.2" height="9.2" viewBox="0 0 10.2 9.2"><path d="M0.3 4.6 H9.4 M5.4 0.6 L9.4 4.6 L5.4 8.6" stroke="#6e6e6e" stroke-width="0.9" fill="none"/></svg>
<div class="dot G" style="left:887.10px;top:253.18px"></div>
<svg style="left:902.70px;top:254.08px" width="10.2" height="9.2" viewBox="0 0 10.2 9.2"><path d="M0.3 4.6 H9.4 M5.4 0.6 L9.4 4.6 L5.4 8.6" stroke="#6e6e6e" stroke-width="0.9" fill="none"/></svg>
<div class="dot G" style="left:930.80px;top:253.18px"></div>
<svg style="left:946.40px;top:254.08px" width="10.2" height="9.2" viewBox="0 0 10.2 9.2"><path d="M0.3 4.6 H9.4 M5.4 0.6 L9.4 4.6 L5.4 8.6" stroke="#6e6e6e" stroke-width="0.9" fill="none"/></svg>
<div class="dot G" style="left:974.60px;top:253.18px"></div>
<svg style="left:990.20px;top:254.08px" width="10.2" height="9.2" viewBox="0 0 10.2 9.2"><path d="M0.3 4.6 H9.4 M5.4 0.6 L9.4 4.6 L5.4 8.6" stroke="#6e6e6e" stroke-width="0.9" fill="none"/></svg>
<div class="row w" style="top:272.02px"></div>
<svg style="left:227.20px;top:280.66px" width="10.6" height="10.6" viewBox="0 0 10.6 10.6"><g fill="#4b5bd1"><rect x="0" y="0" width="4.4" height="4.4" rx="0.8"/><rect x="0" y="5.9" width="4.4" height="4.4" rx="0.8"/><rect x="5.9" y="5.9" width="4.4" height="4.4" rx="0.8"/><path d="M8.15 -0.75 L11.1 2.2 L8.15 5.15 L5.2 2.2 Z"/></g></svg>
<div class="t" style="left:242.60px;top:280.12px;font-size:9.50px;color:#333;letter-spacing:0.040px;">Product development</div>
<svg style="left:540.30px;top:276.96px" width="14" height="14" viewBox="0 0 14 14"><defs><clipPath id="av5"><circle cx="7" cy="7" r="6.85"/></clipPath></defs><g clip-path="url(#av5)"><rect width="14" height="14" fill="#cfcfcf"/><ellipse cx="7" cy="5.4" rx="2.6" ry="3.2" fill="#8d8d8d"/><path d="M0.5 14 Q1.6 9.6 7 9.4 Q12.4 9.6 13.5 14 Z" fill="#444444"/><path d="M6 9.6 L7 12 L8 9.6 Z" fill="#eeeeee"/></g></svg>
<div class="t" style="left:559.30px;top:279.20px;font-size:9.40px;color:#555;letter-spacing:0.051px;">Patrik Bergwall</div>
<div class="t" style="right:472.86px;top:281.59px;font-size:9.30px;color:#555;letter-spacing:0.445px;">85,000.00</div>
<div class="t" style="left:743.40px;top:281.59px;font-size:9.30px;color:#555;letter-spacing:0.630px;">11/29/2018</div>
<div class="dot G" style="left:843.20px;top:280.26px"></div>
<svg style="left:858.80px;top:281.16px" width="10.2" height="9.2" viewBox="0 0 10.2 9.2"><path d="M0.3 4.6 H9.4 M5.4 0.6 L9.4 4.6 L5.4 8.6" stroke="#6e6e6e" stroke-width="0.9" fill="none"/></svg>
<div class="dot G" style="left:887.10px;top:280.26px"></div>
<svg style="left:902.70px;top:281.16px" width="10.2" height="9.2" viewBox="0 0 10.2 9.2"><path d="M0.3 4.6 H9.4 M5.4 0.6 L9.4 4.6 L5.4 8.6" stroke="#6e6e6e" stroke-width="0.9" fill="none"/></svg>
<div class="dot G" style="left:930.80px;top:280.26px"></div>
<svg style="left:946.40px;top:281.16px" width="10.2" height="9.2" viewBox="0 0 10.2 9.2"><path d="M0.3 4.6 H9.4 M5.4 0.6 L9.4 4.6 L5.4 8.6" stroke="#6e6e6e" stroke-width="0.9" fill="none"/></svg>
<div class="dot G" style="left:974.60px;top:280.26px"></div>
<svg style="left:990.20px;top:281.16px" width="10.2" height="9.2" viewBox="0 0 10.2 9.2"><path d="M0.3 4.6 H9.4 M5.4 0.6 L9.4 4.6 L5.4 8.6" stroke="#6e6e6e" stroke-width="0.9" fill="none"/></svg>
<div class="row g" style="top:299.10px"></div>
<svg style="left:198.30px;top:310.84px" width="8.6" height="5" viewBox="0 0 8.6 5"><path d="M0.4 0.4 L4.3 4.6 L8.2 0.4" stroke="#555" stroke-width="0.95" fill="none"/></svg>
<svg style="left:212.80px;top:307.44px" width="9.4" height="9" viewBox="0 0 9.4 9"><rect x="0" y="2.8" width="9.3" height="6" rx="1.3" fill="#333"/><path d="M2.6 3 V1 Q2.6 0.4 3.2 0.4 H6.1 Q6.7 0.4 6.7 1 V3" stroke="#333" stroke-width="0.9" fill="none"/><path d="M0.6 5.2 H8.7" stroke="#555" stroke-width="0.4"/></svg>
<div class="t" style="left:226.90px;top:308.10px;font-size:9.50px;color:#555;letter-spacing:-0.061px;">Business Development</div>
<svg style="left:420.80px;top:307.24px" width="11" height="11" viewBox="0 0 11 11"><path d="M1.3 7.4 L7.9 0.9 Q8.8 0.1 9.8 1.1 Q10.7 2.1 9.9 2.9 L3.4 9.5 L0.5 10.5 Z M7.1 1.7 L9.1 3.7" stroke="#555" stroke-width="0.9" fill="none" stroke-linejoin="round"/></svg>
<svg style="left:451.80px;top:307.24px" width="11" height="11" viewBox="0 0 11 11"><path d="M1.3 7.4 L7.9 0.9 Q8.8 0.1 9.8 1.1 Q10.7 2.1 9.9 2.9 L3.4 9.5 L0.5 10.5 Z M7.1 1.7 L9.1 3.7" stroke="#555" stroke-width="0.9" fill="none" stroke-linejoin="round"/></svg>
<svg style="left:482.80px;top:307.24px" width="11" height="11" viewBox="0 0 11 11"><path d="M1.3 7.4 L7.9 0.9 Q8.8 0.1 9.8 1.1 Q10.7 2.1 9.9 2.9 L3.4 9.5 L0.5 10.5 Z M7.1 1.7 L9.1 3.7" stroke="#555" stroke-width="0.9" fill="none" stroke-linejoin="round"/></svg>
<svg style="left:512.40px;top:307.24px" width="11" height="11" viewBox="0 0 11 11"><circle cx="5.4" cy="5.4" r="4.9" stroke="#555" stroke-width="0.95" fill="none"/><path d="M5.4 4.6 V8" stroke="#555" stroke-width="1"/><circle cx="5.4" cy="3.1" r="0.6" fill="#555"/></svg>
<svg style="left:813.80px;top:306.84px" width="10.4" height="11.4" viewBox="0 0 10.4 11.4"><path d="M0.4 1.9 H10 M3.8 1.7 Q4.2 0.4 5.2 0.4 Q6.2 0.4 6.6 1.7 M1.3 2 L2.2 10 Q2.3 10.9 3.2 10.9 H7.2 Q8.1 10.9 8.2 10 L9.1 2 M4.2 4.5 V8 M6.2 4.5 V8" stroke="#666" stroke-width="0.9" fill="none" stroke-linejoin="round"/></svg>
<svg style="left:540.30px;top:304.04px" width="14" height="14" viewBox="0 0 14 14"><defs><clipPath id="av6"><circle cx="7" cy="7" r="6.85"/></clipPath></defs><g clip-path="url(#av6)"><rect width="14" height="14" fill="#9c9c9c"/><ellipse cx="7" cy="5.4" rx="2.6" ry="3.2" fill="#c9c9c9"/><path d="M3.4 10 Q2.6 1.4 7 1.4 Q11.4 1.4 10.6 10 L9.4 10 Q9.8 3.6 7 3.6 Q4.2 3.6 4.6 10 Z" fill="#2a2a2a"/><path d="M0.5 14 Q1.6 9.6 7 9.4 Q12.4 9.6 13.5 14 Z" fill="#2a2a2a"/><path d="M6 9.6 L7 12 L8 9.6 Z" fill="#bdbdbd"/></g></svg>
<div class="t" style="left:559.30px;top:306.28px;font-size:9.40px;color:#555;letter-spacing:-0.021px;">Linda Larsson</div>
<div class="t" style="right:472.88px;top:308.67px;font-size:9.30px;color:#555;letter-spacing:0.425px;">6,964,100.00</div>
<div class="dot O" style="left:843.20px;top:307.34px"></div>
<div class="dot O" style="left:887.10px;top:307.34px"></div>
<div class="dot O" style="left:930.80px;top:307.34px"></div>
<div class="dot G" style="left:974.60px;top:307.34px"></div>
<div class="row w" style="top:326.18px"></div>
<svg style="left:216.00px;top:334.92px" width="4.8" height="8.4" viewBox="0 0 4.8 8.4"><path d="M0.4 0.4 L4.3 4.2 L0.4 8" stroke="#555" stroke-width="0.95" fill="none"/></svg>
<svg style="left:228.80px;top:333.82px" width="8.2" height="11.2" viewBox="0 0 8.2 11.2"><path d="M0.2 0.8 L4.2 0 V11 L0.2 9.6 Z" fill="#f9c54a"/><path d="M4.6 0 H8 V9.8 L4.6 11.2 Z" fill="#f9c54a"/><path d="M4.4 0.2 V11" stroke="#fde9b8" stroke-width="0.5"/></svg>
<div class="t" style="left:242.60px;top:334.58px;font-size:9.50px;color:#555;letter-spacing:-0.008px;">Product B development</div>
<svg style="left:540.30px;top:331.12px" width="14" height="14" viewBox="0 0 14 14"><defs><clipPath id="av7"><circle cx="7" cy="7" r="6.85"/></clipPath></defs><g clip-path="url(#av7)"><rect width="14" height="14" fill="#f0a132"/><ellipse cx="7" cy="5.4" rx="2.6" ry="3.2" fill="#c98a6e"/><path d="M0.5 14 Q1.6 9.6 7 9.4 Q12.4 9.6 13.5 14 Z" fill="#5a3a2a"/><path d="M6 9.6 L7 12 L8 9.6 Z" fill="#f0a132"/></g></svg>
<div class="t" style="left:559.30px;top:333.36px;font-size:9.40px;color:#555;letter-spacing:0.070px;">Tom Brandt</div>
<div class="t" style="right:472.88px;top:335.75px;font-size:9.30px;color:#555;letter-spacing:0.425px;">4,446,100.00</div>
<div class="dot O" style="left:843.20px;top:334.42px"></div>
<div class="dot O" style="left:887.10px;top:334.42px"></div>
<div class="dot O" style="left:930.80px;top:334.42px"></div>
<div class="dot O" style="left:974.60px;top:334.42px"></div>
<div class="row g" style="top:353.26px"></div>
<svg style="left:227.20px;top:361.90px" width="10.6" height="10.6" viewBox="0 0 10.6 10.6"><g fill="#4b5bd1"><rect x="0" y="0" width="4.4" height="4.4" rx="0.8"/><rect x="0" y="5.9" width="4.4" height="4.4" rx="0.8"/><rect x="5.9" y="5.9" width="4.4" height="4.4" rx="0.8"/><path d="M8.15 -0.75 L11.1 2.2 L8.15 5.15 L5.2 2.2 Z"/></g></svg>
<div class="t" style="left:242.60px;top:361.36px;font-size:9.50px;color:#333;letter-spacing:0.012px;">Bit 45V</div>
<svg style="left:540.30px;top:358.20px" width="14" height="14" viewBox="0 0 14 14"><defs><clipPath id="av8"><circle cx="7" cy="7" r="6.85"/></clipPath></defs><g clip-path="url(#av8)"><rect width="14" height="14" fill="#2b2b2b"/><ellipse cx="7" cy="4.8" rx="2.3" ry="2.8" fill="#7a7a7a"/><path d="M5.4 8.2 L6.8 8 L8.6 14 L6.6 14 Z" fill="#e8e8e8"/></g></svg>
<div class="t" style="left:559.30px;top:360.44px;font-size:9.40px;color:#555;letter-spacing:-0.005px;">Fredrik Hjelmare</div>
<div class="t" style="right:472.86px;top:362.83px;font-size:9.30px;color:#555;letter-spacing:0.445px;">150,000.00</div>
<div class="t" style="left:743.40px;top:362.83px;font-size:9.30px;color:#555;letter-spacing:0.640px;">4/24/2023</div>
<div class="dot G" style="left:843.20px;top:361.50px"></div>
<div class="dot O" style="left:887.10px;top:361.50px"></div>
<div class="dot O" style="left:930.80px;top:361.50px"></div>
<div class="dot G" style="left:974.60px;top:361.50px"></div>
<div class="row w" style="top:380.34px"></div>
<svg style="left:227.20px;top:388.98px" width="10.6" height="10.6" viewBox="0 0 10.6 10.6"><g fill="#4b5bd1"><rect x="0" y="0" width="4.4" height="4.4" rx="0.8"/><rect x="0" y="5.9" width="4.4" height="4.4" rx="0.8"/><rect x="5.9" y="5.9" width="4.4" height="4.4" rx="0.8"/><path d="M8.15 -0.75 L11.1 2.2 L8.15 5.15 L5.2 2.2 Z"/></g></svg>
<div class="t" style="left:242.60px;top:388.44px;font-size:9.50px;color:#333;letter-spacing:0.009px;">Change of materials handling process</div>
<svg style="left:540.30px;top:385.28px" width="14" height="14" viewBox="0 0 14 14"><defs><clipPath id="av9"><circle cx="7" cy="7" r="6.85"/></clipPath></defs><g clip-path="url(#av9)"><rect width="14" height="14" fill="#8f8f8f"/><ellipse cx="7" cy="5.4" rx="2.6" ry="3.2" fill="#c0c0c0"/><path d="M0.5 14 Q1.6 9.6 7 9.4 Q12.4 9.6 13.5 14 Z" fill="#333333"/><path d="M6 9.6 L7 12 L8 9.6 Z" fill="#d0d0d0"/></g></svg>
<div class="t" style="left:559.30px;top:387.52px;font-size:9.40px;color:#555;letter-spacing:0.059px;">Anders Östby</div>
<div class="t" style="right:472.86px;top:389.91px;font-size:9.30px;color:#555;letter-spacing:0.445px;">18,000.00</div>
<div class="t" style="left:743.40px;top:389.91px;font-size:9.30px;color:#555;letter-spacing:0.640px;">9/28/2018</div>
<div class="dot O" style="left:843.20px;top:388.58px"></div>
<svg style="left:858.80px;top:389.18px" width="11" height="7.4" viewBox="0 0 11 7.4"><path d="M0.4 0.6 L3.4 2.6 L4.2 1.8 L9.8 6.6 M9.9 3.7 V6.7 H6.8" stroke="#484848" stroke-width="1" fill="none" stroke-linejoin="round"/></svg>
<div class="dot G" style="left:887.10px;top:388.58px"></div>
<svg style="left:902.70px;top:389.48px" width="10.2" height="9.2" viewBox="0 0 10.2 9.2"><path d="M0.3 4.6 H9.4 M5.4 0.6 L9.4 4.6 L5.4 8.6" stroke="#6e6e6e" stroke-width="0.9" fill="none"/></svg>
<div class="dot G" style="left:930.80px;top:388.58px"></div>
<svg style="left:946.40px;top:389.48px" width="10.2" height="9.2" viewBox="0 0 10.2 9.2"><path d="M0.3 4.6 H9.4 M5.4 0.6 L9.4 4.6 L5.4 8.6" stroke="#6e6e6e" stroke-width="0.9" fill="none"/></svg>
<div class="dot G" style="left:974.60px;top:388.58px"></div>
<svg style="left:990.20px;top:389.48px" width="10.2" height="9.2" viewBox="0 0 10.2 9.2"><path d="M0.3 4.6 H9.4 M5.4 0.6 L9.4 4.6 L5.4 8.6" stroke="#6e6e6e" stroke-width="0.9" fill="none"/></svg>
<div class="row g" style="top:407.42px"></div>
<svg style="left:227.20px;top:416.06px" width="10.6" height="10.6" viewBox="0 0 10.6 10.6"><g fill="#4b5bd1"><rect x="0" y="0" width="4.4" height="4.4" rx="0.8"/><rect x="0" y="5.9" width="4.4" height="4.4" rx="0.8"/><rect x="5.9" y="5.9" width="4.4" height="4.4" rx="0.8"/><path d="M8.15 -0.75 L11.1 2.2 L8.15 5.15 L5.2 2.2 Z"/></g></svg>
<div class="t" style="left:242.60px;top:415.52px;font-size:9.50px;color:#333;letter-spacing:0.082px;">New component for article X22</div>
<svg style="left:540.30px;top:412.36px" width="14" height="14" viewBox="0 0 14 14"><defs><clipPath id="av10"><circle cx="7" cy="7" r="6.85"/></clipPath></defs><g clip-path="url(#av10)"><rect width="14" height="14" fill="#a8a8a8"/><ellipse cx="7" cy="5.4" rx="2.6" ry="3.2" fill="#d0d0d0"/><path d="M0.5 14 Q1.6 9.6 7 9.4 Q12.4 9.6 13.5 14 Z" fill="#2f2f2f"/><path d="M6 9.6 L7 12 L8 9.6 Z" fill="#e0e0e0"/></g></svg>
<div class="t" style="left:559.30px;top:414.60px;font-size:9.40px;color:#555;letter-spacing:-0.091px;">Erik Carlsson</div>
<div class="t" style="right:472.86px;top:416.99px;font-size:9.30px;color:#555;letter-spacing:0.445px;">700,000.00</div>
<div class="t" style="left:743.40px;top:416.99px;font-size:9.30px;color:#555;letter-spacing:0.630px;">11/29/2018</div>
<div class="dot G" style="left:843.20px;top:415.66px"></div>
<svg style="left:858.80px;top:416.36px" width="11" height="7.4" viewBox="0 0 11 7.4"><path d="M0.4 7 L4.2 3.6 L5.6 4.8 L9.8 0.8 M6.8 0.8 H9.8 V3.7" stroke="#484848" stroke-width="1" fill="none" stroke-linejoin="round"/></svg>
<div class="dot O" style="left:887.10px;top:415.66px"></div>
<svg style="left:902.70px;top:416.26px" width="11" height="7.4" viewBox="0 0 11 7.4"><path d="M0.4 0.6 L3.4 2.6 L4.2 1.8 L9.8 6.6 M9.9 3.7 V6.7 H6.8" stroke="#484848" stroke-width="1" fill="none" stroke-linejoin="round"/></svg>
<div class="dot O" style="left:930.80px;top:415.66px"></div>
<svg style="left:946.40px;top:416.36px" width="11" height="7.4" viewBox="0 0 11 7.4"><path d="M0.4 7 L4.2 3.6 L5.6 4.8 L9.8 0.8 M6.8 0.8 H9.8 V3.7" stroke="#484848" stroke-width="1" fill="none" stroke-linejoin="round"/></svg>
<div class="dot G" style="left:974.60px;top:415.66px"></div>
<svg style="left:990.20px;top:416.36px" width="11" height="7.4" viewBox="0 0 11 7.4"><path d="M0.4 7 L4.2 3.6 L5.6 4.8 L9.8 0.8 M6.8 0.8 H9.8 V3.7" stroke="#484848" stroke-width="1" fill="none" stroke-linejoin="round"/></svg>
<div class="row w" style="top:434.50px"></div>
<svg style="left:227.20px;top:443.14px" width="10.6" height="10.6" viewBox="0 0 10.6 10.6"><g fill="#4b5bd1"><rect x="0" y="0" width="4.4" height="4.4" rx="0.8"/><rect x="0" y="5.9" width="4.4" height="4.4" rx="0.8"/><rect x="5.9" y="5.9" width="4.4" height="4.4" rx="0.8"/><path d="M8.15 -0.75 L11.1 2.2 L8.15 5.15 L5.2 2.2 Z"/></g></svg>
<div class="t" style="left:242.60px;top:442.60px;font-size:9.50px;color:#333;letter-spacing:0.059px;">New production line</div>
<svg style="left:540.30px;top:439.44px" width="14" height="14" viewBox="0 0 14 14"><defs><clipPath id="av11"><circle cx="7" cy="7" r="6.85"/></clipPath></defs><g clip-path="url(#av11)"><rect width="14" height="14" fill="#8a8a8a"/><ellipse cx="7" cy="5.4" rx="2.6" ry="3.2" fill="#bdbdbd"/><path d="M0.5 14 Q1.6 9.6 7 9.4 Q12.4 9.6 13.5 14 Z" fill="#303030"/><path d="M6 9.6 L7 12 L8 9.6 Z" fill="#cccccc"/></g></svg>
<div class="t" style="left:559.30px;top:441.68px;font-size:9.40px;color:#555;letter-spacing:-0.070px;">Daniel Sten</div>
<div class="t" style="right:472.86px;top:444.07px;font-size:9.30px;color:#555;letter-spacing:0.445px;">200,000.00</div>
<div class="t" style="left:743.40px;top:444.07px;font-size:9.30px;color:#555;letter-spacing:0.630px;">11/29/2018</div>
<div class="dot G" style="left:843.20px;top:442.74px"></div>
<svg style="left:858.80px;top:443.64px" width="10.2" height="9.2" viewBox="0 0 10.2 9.2"><path d="M0.3 4.6 H9.4 M5.4 0.6 L9.4 4.6 L5.4 8.6" stroke="#6e6e6e" stroke-width="0.9" fill="none"/></svg>
<div class="dot G" style="left:887.10px;top:442.74px"></div>
<svg style="left:902.70px;top:443.64px" width="10.2" height="9.2" viewBox="0 0 10.2 9.2"><path d="M0.3 4.6 H9.4 M5.4 0.6 L9.4 4.6 L5.4 8.6" stroke="#6e6e6e" stroke-width="0.9" fill="none"/></svg>
<div class="dot G" style="left:930.80px;top:442.74px"></div>
<svg style="left:946.40px;top:443.64px" width="10.2" height="9.2" viewBox="0 0 10.2 9.2"><path d="M0.3 4.6 H9.4 M5.4 0.6 L9.4 4.6 L5.4 8.6" stroke="#6e6e6e" stroke-width="0.9" fill="none"/></svg>
<div class="dot G" style="left:974.60px;top:442.74px"></div>
<svg style="left:990.20px;top:443.64px" width="10.2" height="9.2" viewBox="0 0 10.2 9.2"><path d="M0.3 4.6 H9.4 M5.4 0.6 L9.4 4.6 L5.4 8.6" stroke="#6e6e6e" stroke-width="0.9" fill="none"/></svg>
<div class="row g" style="top:461.58px"></div>
<svg style="left:227.20px;top:470.22px" width="10.6" height="10.6" viewBox="0 0 10.6 10.6"><g fill="#4b5bd1"><rect x="0" y="0" width="4.4" height="4.4" rx="0.8"/><rect x="0" y="5.9" width="4.4" height="4.4" rx="0.8"/><rect x="5.9" y="5.9" width="4.4" height="4.4" rx="0.8"/><path d="M8.15 -0.75 L11.1 2.2 L8.15 5.15 L5.2 2.2 Z"/></g></svg>
<div class="t" style="left:242.60px;top:469.68px;font-size:9.50px;color:#333;letter-spacing:0.036px;">New wind mill</div>
<svg style="left:540.30px;top:466.52px" width="14" height="14" viewBox="0 0 14 14"><defs><clipPath id="av12"><circle cx="7" cy="7" r="6.85"/></clipPath></defs><g clip-path="url(#av12)"><rect width="14" height="14" fill="#2b2b2b"/><ellipse cx="7" cy="4.8" rx="2.3" ry="2.8" fill="#7a7a7a"/><path d="M5.4 8.2 L6.8 8 L8.6 14 L6.6 14 Z" fill="#e8e8e8"/></g></svg>
<div class="t" style="left:559.30px;top:468.76px;font-size:9.40px;color:#555;letter-spacing:-0.005px;">Fredrik Hjelmare</div>
<div class="t" style="right:472.88px;top:471.15px;font-size:9.30px;color:#555;letter-spacing:0.425px;">1,000,000.00</div>
<div class="t" style="left:743.40px;top:471.15px;font-size:9.30px;color:#555;letter-spacing:0.630px;">11/29/2018</div>
<div class="dot G" style="left:843.20px;top:469.82px"></div>
<svg style="left:858.80px;top:470.72px" width="10.2" height="9.2" viewBox="0 0 10.2 9.2"><path d="M0.3 4.6 H9.4 M5.4 0.6 L9.4 4.6 L5.4 8.6" stroke="#6e6e6e" stroke-width="0.9" fill="none"/></svg>
<div class="dot G" style="left:887.10px;top:469.82px"></div>
<svg style="left:902.70px;top:470.72px" width="10.2" height="9.2" viewBox="0 0 10.2 9.2"><path d="M0.3 4.6 H9.4 M5.4 0.6 L9.4 4.6 L5.4 8.6" stroke="#6e6e6e" stroke-width="0.9" fill="none"/></svg>
<div class="dot G" style="left:930.80px;top:469.82px"></div>
<svg style="left:946.40px;top:470.72px" width="10.2" height="9.2" viewBox="0 0 10.2 9.2"><path d="M0.3 4.6 H9.4 M5.4 0.6 L9.4 4.6 L5.4 8.6" stroke="#6e6e6e" stroke-width="0.9" fill="none"/></svg>
<div class="dot G" style="left:974.60px;top:469.82px"></div>
<svg style="left:990.20px;top:470.72px" width="10.2" height="9.2" viewBox="0 0 10.2 9.2"><path d="M0.3 4.6 H9.4 M5.4 0.6 L9.4 4.6 L5.4 8.6" stroke="#6e6e6e" stroke-width="0.9" fill="none"/></svg>
<div class="row w" style="top:488.66px"></div>
<svg style="left:227.20px;top:497.30px" width="10.6" height="10.6" viewBox="0 0 10.6 10.6"><g fill="#4b5bd1"><rect x="0" y="0" width="4.4" height="4.4" rx="0.8"/><rect x="0" y="5.9" width="4.4" height="4.4" rx="0.8"/><rect x="5.9" y="5.9" width="4.4" height="4.4" rx="0.8"/><path d="M8.15 -0.75 L11.1 2.2 L8.15 5.15 L5.2 2.2 Z"/></g></svg>
<div class="t" style="left:242.60px;top:496.76px;font-size:9.50px;color:#333;letter-spacing:0.072px;">Product development p2</div>
<svg style="left:540.30px;top:493.60px" width="14" height="14" viewBox="0 0 14 14"><defs><clipPath id="av13"><circle cx="7" cy="7" r="6.85"/></clipPath></defs><g clip-path="url(#av13)"><rect width="14" height="14" fill="#cfcfcf"/><ellipse cx="7" cy="5.4" rx="2.6" ry="3.2" fill="#8d8d8d"/><path d="M0.5 14 Q1.6 9.6 7 9.4 Q12.4 9.6 13.5 14 Z" fill="#444444"/><path d="M6 9.6 L7 12 L8 9.6 Z" fill="#eeeeee"/></g></svg>
<div class="t" style="left:559.30px;top:495.84px;font-size:9.40px;color:#555;letter-spacing:0.051px;">Patrik Bergwall</div>
<div class="t" style="right:472.86px;top:498.23px;font-size:9.30px;color:#555;letter-spacing:0.445px;">600,000.00</div>
<div class="t" style="left:743.40px;top:498.23px;font-size:9.30px;color:#555;letter-spacing:0.630px;">11/29/2018</div>
<div class="dot G" style="left:843.20px;top:496.90px"></div>
<svg style="left:858.80px;top:497.80px" width="10.2" height="9.2" viewBox="0 0 10.2 9.2"><path d="M0.3 4.6 H9.4 M5.4 0.6 L9.4 4.6 L5.4 8.6" stroke="#6e6e6e" stroke-width="0.9" fill="none"/></svg>
<div class="dot G" style="left:887.10px;top:496.90px"></div>
<svg style="left:902.70px;top:497.80px" width="10.2" height="9.2" viewBox="0 0 10.2 9.2"><path d="M0.3 4.6 H9.4 M5.4 0.6 L9.4 4.6 L5.4 8.6" stroke="#6e6e6e" stroke-width="0.9" fill="none"/></svg>
<div class="dot O" style="left:930.80px;top:496.90px"></div>
<svg style="left:946.40px;top:497.60px" width="11" height="7.4" viewBox="0 0 11 7.4"><path d="M0.4 7 L4.2 3.6 L5.6 4.8 L9.8 0.8 M6.8 0.8 H9.8 V3.7" stroke="#484848" stroke-width="1" fill="none" stroke-linejoin="round"/></svg>
<div class="dot G" style="left:974.60px;top:496.90px"></div>
<svg style="left:990.20px;top:497.80px" width="10.2" height="9.2" viewBox="0 0 10.2 9.2"><path d="M0.3 4.6 H9.4 M5.4 0.6 L9.4 4.6 L5.4 8.6" stroke="#6e6e6e" stroke-width="0.9" fill="none"/></svg>
<div class="row g" style="top:515.74px"></div>
<svg style="left:227.20px;top:524.38px" width="10.6" height="10.6" viewBox="0 0 10.6 10.6"><g fill="#4b5bd1"><rect x="0" y="0" width="4.4" height="4.4" rx="0.8"/><rect x="0" y="5.9" width="4.4" height="4.4" rx="0.8"/><rect x="5.9" y="5.9" width="4.4" height="4.4" rx="0.8"/><path d="M8.15 -0.75 L11.1 2.2 L8.15 5.15 L5.2 2.2 Z"/></g></svg>
<div class="t" style="left:242.60px;top:523.84px;font-size:9.50px;color:#333;letter-spacing:-0.071px;">Project Nova</div>
<svg style="left:540.30px;top:520.68px" width="14" height="14" viewBox="0 0 14 14"><defs><clipPath id="av14"><circle cx="7" cy="7" r="6.85"/></clipPath></defs><g clip-path="url(#av14)"><rect width="14" height="14" fill="#2b2b2b"/><ellipse cx="7" cy="4.8" rx="2.3" ry="2.8" fill="#7a7a7a"/><path d="M5.4 8.2 L6.8 8 L8.6 14 L6.6 14 Z" fill="#e8e8e8"/></g></svg>
<div class="t" style="left:559.30px;top:522.92px;font-size:9.40px;color:#555;letter-spacing:-0.005px;">Fredrik Hjelmare</div>
<div class="t" style="right:472.78px;top:525.31px;font-size:9.30px;color:#555;letter-spacing:0.519px;">0.00</div>
<div class="t" style="left:743.40px;top:525.31px;font-size:9.30px;color:#555;letter-spacing:0.640px;">1/21/2020</div>
<div class="dot O" style="left:843.20px;top:523.98px"></div>
<svg style="left:858.80px;top:524.88px" width="10.2" height="9.2" viewBox="0 0 10.2 9.2"><path d="M0.3 4.6 H9.4 M5.4 0.6 L9.4 4.6 L5.4 8.6" stroke="#6e6e6e" stroke-width="0.9" fill="none"/></svg>
<div class="dot G" style="left:887.10px;top:523.98px"></div>
<svg style="left:902.70px;top:524.68px" width="11" height="7.4" viewBox="0 0 11 7.4"><path d="M0.4 7 L4.2 3.6 L5.6 4.8 L9.8 0.8 M6.8 0.8 H9.8 V3.7" stroke="#484848" stroke-width="1" fill="none" stroke-linejoin="round"/></svg>
<div class="dot G" style="left:930.80px;top:523.98px"></div>
<svg style="left:946.40px;top:524.58px" width="11" height="7.4" viewBox="0 0 11 7.4"><path d="M0.4 0.6 L3.4 2.6 L4.2 1.8 L9.8 6.6 M9.9 3.7 V6.7 H6.8" stroke="#484848" stroke-width="1" fill="none" stroke-linejoin="round"/></svg>
<div class="dot O" style="left:974.60px;top:523.98px"></div>
<svg style="left:990.20px;top:524.68px" width="11" height="7.4" viewBox="0 0 11 7.4"><path d="M0.4 7 L4.2 3.6 L5.6 4.8 L9.8 0.8 M6.8 0.8 H9.8 V3.7" stroke="#484848" stroke-width="1" fill="none" stroke-linejoin="round"/></svg>
<div class="row w" style="top:542.82px"></div>
<svg style="left:227.20px;top:551.46px" width="10.6" height="10.6" viewBox="0 0 10.6 10.6"><g fill="#4b5bd1"><rect x="0" y="0" width="4.4" height="4.4" rx="0.8"/><rect x="0" y="5.9" width="4.4" height="4.4" rx="0.8"/><rect x="5.9" y="5.9" width="4.4" height="4.4" rx="0.8"/><path d="M8.15 -0.75 L11.1 2.2 L8.15 5.15 L5.2 2.2 Z"/></g></svg>
<div class="t" style="left:242.60px;top:550.92px;font-size:9.50px;color:#333;letter-spacing:-0.117px;">Volvo DRC 4.3</div>
<svg style="left:540.30px;top:547.76px" width="14" height="14" viewBox="0 0 14 14"><defs><clipPath id="av15"><circle cx="7" cy="7" r="6.85"/></clipPath></defs><g clip-path="url(#av15)"><rect width="14" height="14" fill="#2b2b2b"/><ellipse cx="7" cy="4.8" rx="2.3" ry="2.8" fill="#7a7a7a"/><path d="M5.4 8.2 L6.8 8 L8.6 14 L6.6 14 Z" fill="#e8e8e8"/></g></svg>
<div class="t" style="left:559.30px;top:550.00px;font-size:9.40px;color:#555;letter-spacing:-0.005px;">Fredrik Hjelmare</div>
<div class="t" style="right:472.78px;top:552.39px;font-size:9.30px;color:#555;letter-spacing:0.519px;">0.00</div>
<div class="row g" style="top:569.90px"></div>
<svg style="left:200.40px;top:579.24px" width="4.8" height="8.4" viewBox="0 0 4.8 8.4"><path d="M0.4 0.4 L4.3 4.2 L0.4 8" stroke="#555" stroke-width="0.95" fill="none"/></svg>
<svg style="left:212.80px;top:578.24px" width="9.4" height="9" viewBox="0 0 9.4 9"><rect x="0" y="2.8" width="9.3" height="6" rx="1.3" fill="#333"/><path d="M2.6 3 V1 Q2.6 0.4 3.2 0.4 H6.1 Q6.7 0.4 6.7 1 V3" stroke="#333" stroke-width="0.9" fill="none"/><path d="M0.6 5.2 H8.7" stroke="#555" stroke-width="0.4"/></svg>
<div class="t" style="left:226.90px;top:578.90px;font-size:9.50px;color:#555;letter-spacing:0.002px;">Business Transformation</div>
<svg style="left:420.80px;top:578.04px" width="11" height="11" viewBox="0 0 11 11"><path d="M1.3 7.4 L7.9 0.9 Q8.8 0.1 9.8 1.1 Q10.7 2.1 9.9 2.9 L3.4 9.5 L0.5 10.5 Z M7.1 1.7 L9.1 3.7" stroke="#555" stroke-width="0.9" fill="none" stroke-linejoin="round"/></svg>
<svg style="left:451.80px;top:578.04px" width="11" height="11" viewBox="0 0 11 11"><path d="M1.3 7.4 L7.9 0.9 Q8.8 0.1 9.8 1.1 Q10.7 2.1 9.9 2.9 L3.4 9.5 L0.5 10.5 Z M7.1 1.7 L9.1 3.7" stroke="#555" stroke-width="0.9" fill="none" stroke-linejoin="round"/></svg>
<svg style="left:482.80px;top:578.04px" width="11" height="11" viewBox="0 0 11 11"><path d="M1.3 7.4 L7.9 0.9 Q8.8 0.1 9.8 1.1 Q10.7 2.1 9.9 2.9 L3.4 9.5 L0.5 10.5 Z M7.1 1.7 L9.1 3.7" stroke="#555" stroke-width="0.9" fill="none" stroke-linejoin="round"/></svg>
<svg style="left:813.80px;top:577.64px" width="10.4" height="11.4" viewBox="0 0 10.4 11.4"><path d="M0.4 1.9 H10 M3.8 1.7 Q4.2 0.4 5.2 0.4 Q6.2 0.4 6.6 1.7 M1.3 2 L2.2 10 Q2.3 10.9 3.2 10.9 H7.2 Q8.1 10.9 8.2 10 L9.1 2 M4.2 4.5 V8 M6.2 4.5 V8" stroke="#666" stroke-width="0.9" fill="none" stroke-linejoin="round"/></svg>
<svg style="left:540.30px;top:574.84px" width="14" height="14" viewBox="0 0 14 14"><defs><clipPath id="av16"><circle cx="7" cy="7" r="6.85"/></clipPath></defs><g clip-path="url(#av16)"><rect width="14" height="14" fill="#8f8f8f"/><ellipse cx="7" cy="5.4" rx="2.6" ry="3.2" fill="#c0c0c0"/><path d="M0.5 14 Q1.6 9.6 7 9.4 Q12.4 9.6 13.5 14 Z" fill="#333333"/><path d="M6 9.6 L7 12 L8 9.6 Z" fill="#d0d0d0"/></g></svg>
<div class="t" style="left:559.30px;top:577.08px;font-size:9.40px;color:#555;letter-spacing:0.059px;">Anders Östby</div>
<div class="t" style="right:472.88px;top:579.47px;font-size:9.30px;color:#555;letter-spacing:0.419px;">4,110,000.00</div>
<div class="dot G" style="left:843.20px;top:578.14px"></div>
<div class="dot O" style="left:887.10px;top:578.14px"></div>
<div class="dot O" style="left:930.80px;top:578.14px"></div>
<div class="dot G" style="left:974.60px;top:578.14px"></div>
<div class="row w" style="top:596.98px"></div>
<svg style="left:200.40px;top:606.32px" width="4.8" height="8.4" viewBox="0 0 4.8 8.4"><path d="M0.4 0.4 L4.3 4.2 L0.4 8" stroke="#555" stroke-width="0.95" fill="none"/></svg>
<svg style="left:212.80px;top:605.32px" width="9.4" height="9" viewBox="0 0 9.4 9"><rect x="0" y="2.8" width="9.3" height="6" rx="1.3" fill="#333"/><path d="M2.6 3 V1 Q2.6 0.4 3.2 0.4 H6.1 Q6.7 0.4 6.7 1 V3" stroke="#333" stroke-width="0.9" fill="none"/><path d="M0.6 5.2 H8.7" stroke="#555" stroke-width="0.4"/></svg>
<div class="t" style="left:226.90px;top:605.98px;font-size:9.50px;color:#555;letter-spacing:0.038px;">Strategic Projects</div>
<svg style="left:420.80px;top:605.12px" width="11" height="11" viewBox="0 0 11 11"><path d="M1.3 7.4 L7.9 0.9 Q8.8 0.1 9.8 1.1 Q10.7 2.1 9.9 2.9 L3.4 9.5 L0.5 10.5 Z M7.1 1.7 L9.1 3.7" stroke="#555" stroke-width="0.9" fill="none" stroke-linejoin="round"/></svg>
<svg style="left:451.80px;top:605.12px" width="11" height="11" viewBox="0 0 11 11"><path d="M1.3 7.4 L7.9 0.9 Q8.8 0.1 9.8 1.1 Q10.7 2.1 9.9 2.9 L3.4 9.5 L0.5 10.5 Z M7.1 1.7 L9.1 3.7" stroke="#555" stroke-width="0.9" fill="none" stroke-linejoin="round"/></svg>
<svg style="left:482.80px;top:605.12px" width="11" height="11" viewBox="0 0 11 11"><path d="M1.3 7.4 L7.9 0.9 Q8.8 0.1 9.8 1.1 Q10.7 2.1 9.9 2.9 L3.4 9.5 L0.5 10.5 Z M7.1 1.7 L9.1 3.7" stroke="#555" stroke-width="0.9" fill="none" stroke-linejoin="round"/></svg>
<svg style="left:512.40px;top:605.12px" width="11" height="11" viewBox="0 0 11 11"><circle cx="5.4" cy="5.4" r="4.9" stroke="#555" stroke-width="0.95" fill="none"/><path d="M5.4 4.6 V8" stroke="#555" stroke-width="1"/><circle cx="5.4" cy="3.1" r="0.6" fill="#555"/></svg>
<svg style="left:813.80px;top:604.72px" width="10.4" height="11.4" viewBox="0 0 10.4 11.4"><path d="M0.4 1.9 H10 M3.8 1.7 Q4.2 0.4 5.2 0.4 Q6.2 0.4 6.6 1.7 M1.3 2 L2.2 10 Q2.3 10.9 3.2 10.9 H7.2 Q8.1 10.9 8.2 10 L9.1 2 M4.2 4.5 V8 M6.2 4.5 V8" stroke="#666" stroke-width="0.9" fill="none" stroke-linejoin="round"/></svg>
<svg style="left:540.30px;top:601.92px" width="14" height="14" viewBox="0 0 14 14"><defs><clipPath id="av17"><circle cx="7" cy="7" r="6.85"/></clipPath></defs><g clip-path="url(#av17)"><rect width="14" height="14" fill="#a0a0a0"/><ellipse cx="7" cy="5.4" rx="2.6" ry="3.2" fill="#cccccc"/><path d="M3.4 10 Q2.6 1.4 7 1.4 Q11.4 1.4 10.6 10 L9.4 10 Q9.8 3.6 7 3.6 Q4.2 3.6 4.6 10 Z" fill="#2a2a2a"/><path d="M0.5 14 Q1.6 9.6 7 9.4 Q12.4 9.6 13.5 14 Z" fill="#2a2a2a"/><path d="M6 9.6 L7 12 L8 9.6 Z" fill="#bdbdbd"/></g></svg>
<div class="t" style="left:559.30px;top:604.16px;font-size:9.40px;color:#555;letter-spacing:0.004px;">Linda Särnberger</div>
<div class="t" style="right:472.88px;top:606.55px;font-size:9.30px;color:#555;letter-spacing:0.425px;">1,318,000.00</div>
<div class="dot G" style="left:843.20px;top:605.22px"></div>
<div class="dot O" style="left:887.10px;top:605.22px"></div>
<div class="dot O" style="left:930.80px;top:605.22px"></div>
<div class="dot O" style="left:974.60px;top:605.22px"></div>
<div class="a" style="left:187.3px;top:163.7px;width:1px;height:460.6px;background:#e6e6e6"></div>
<div class="a" style="left:1009px;top:163.7px;width:1px;height:460.6px;background:#e6e6e6"></div>
<div class="a" style="left:187.3px;top:624px;width:822.7px;height:1px;background:#e6e6e6"></div>
<svg style="left:1059.00px;top:657.30px" width="133" height="18" viewBox="0 0 133 18"><g stroke="#34508f" stroke-width="1.85" fill="none" stroke-miterlimit="1.6"><path d="M14.6 3.3 A7.75 7.75 0 1 0 14.6 13.9"/><path d="M15.8 17.1 L23.8 0.7 L31.7 17.1 M19 11 H28.6"/><path d="M34.3 17 V0.6 L48.1 16.4 V0.2"/><path d="M60.9 0.8 H53.2 V16.2 H60.9 M53.2 7.4 H60.4"/><path d="M62.7 17.1 L70.7 0.7 L78.3 17.1 M65.9 11.3 H75.1"/></g><g fill="#2f4a8b"><path fill-rule="evenodd" d="M92.8 -0.1 A8.6 8.9 0 1 1 92.8 17.7 A8.6 8.9 0 1 1 92.8 -0.1 Z M92.8 3.8 A4.5 5 0 1 0 92.8 13.8 A4.5 5 0 1 0 92.8 3.8 Z"/><path d="M102.7 17.3 V0.1 H106.4 L115.7 10.4 V0.1 H119.7 V17.3 H116 L106.7 7.1 V17.3 Z"/><path d="M122 0.1 H132 V3.7 H126 V6.9 H131.5 V10.4 H126 V13.8 H132 V17.3 H122 Z"/></g></svg>
<div class="t" style="left:1059.00px;top:646.96px;font-size:6.90px;color:#324d8c;letter-spacing:0.881px;">POWERED BY</div>
<div class="t" style="left:1161.50px;top:646.64px;font-size:8.22px;color:#7d92cb;">2023.3.5</div>
<div class="a" style="left:1161.5px;top:654.3px;width:32px;height:0.7px;background:#7f93cc"></div>
<div class="a" style="left:1197.6px;top:677.6px;width:5px;height:5px;border-radius:50%;background:#9cb8d4"></div>
</body></html>
